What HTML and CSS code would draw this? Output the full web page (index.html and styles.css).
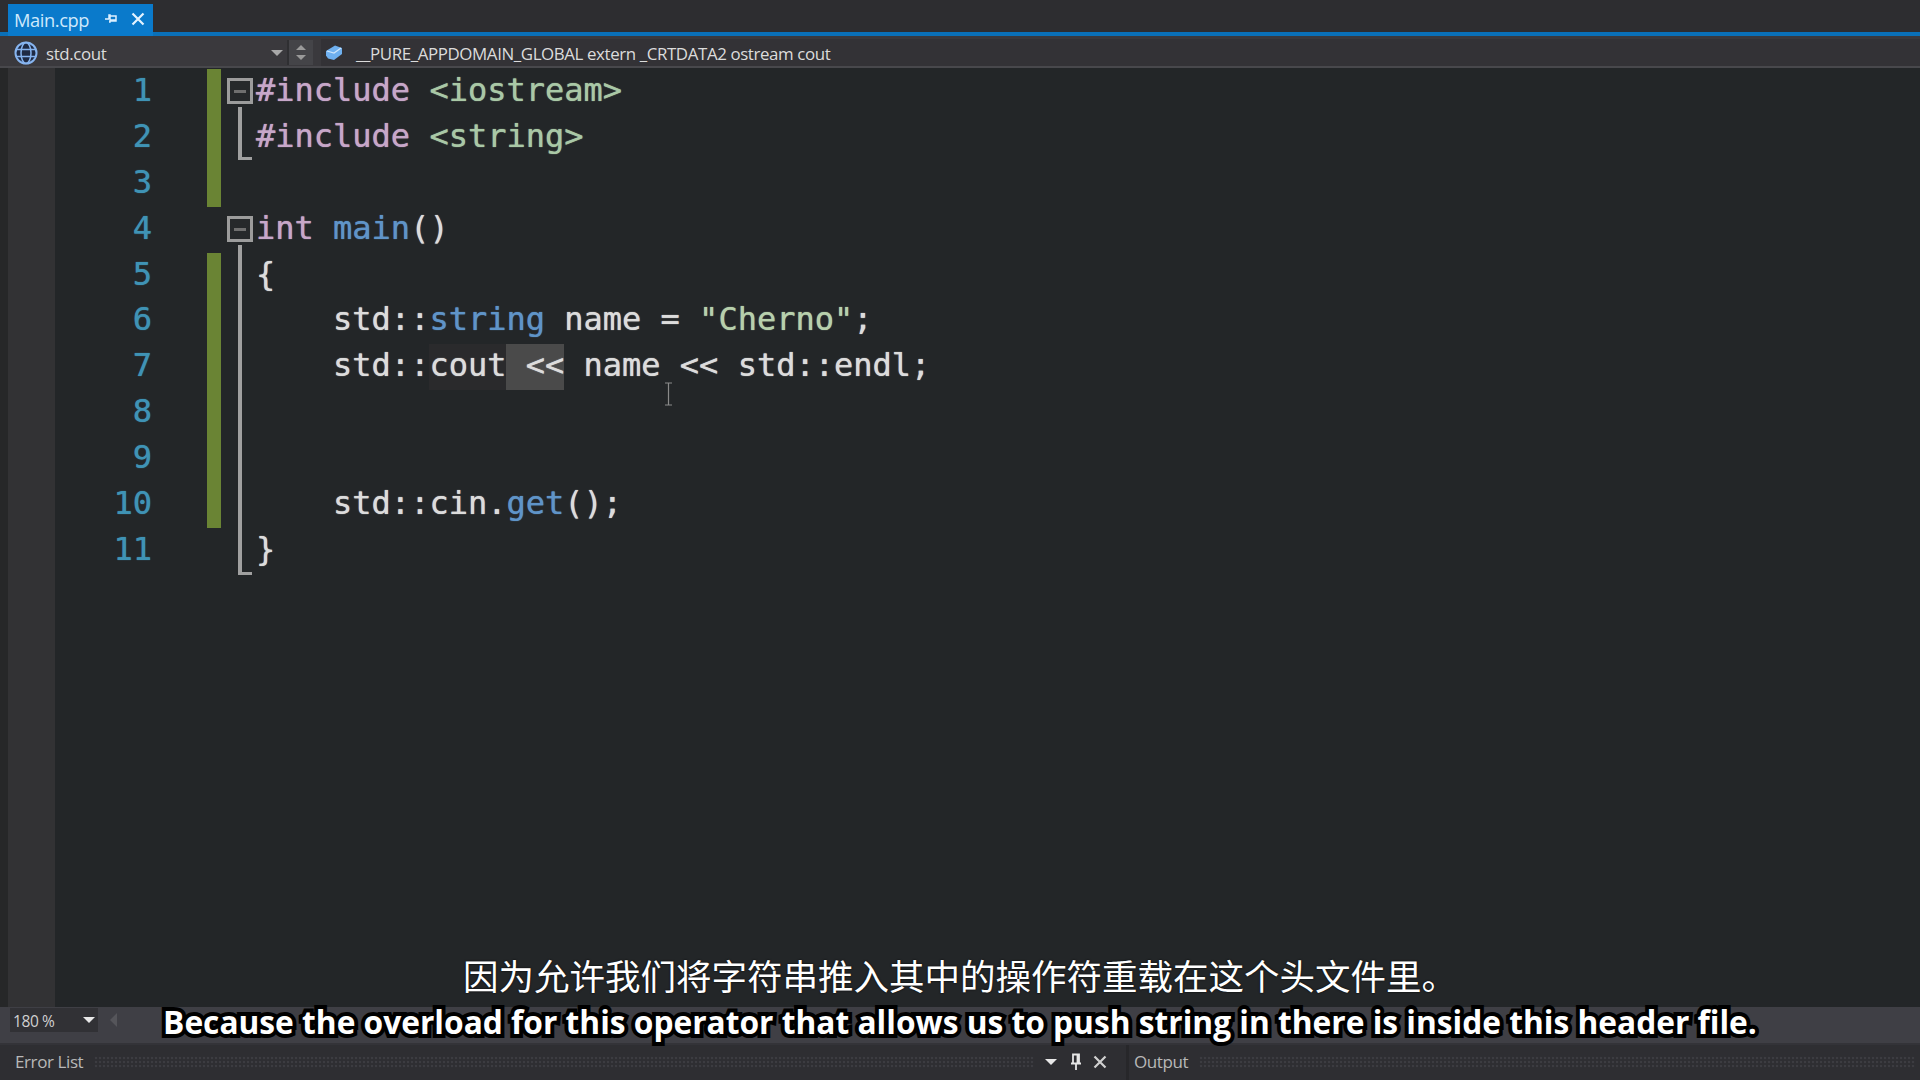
FILE: index.html
```html
<!DOCTYPE html>
<html lang="en">
<head>
<meta charset="utf-8">
<title>Main.cpp</title>
<link rel="stylesheet" href="styles.css">
</head>
<body>
<div class="app">
  <div class="tabbar">
    <div class="tab">
      <span class="tab-name">Main.cpp</span>
      <svg class="tab-pin" width="14" height="12" viewBox="0 0 14 12"><path d="M1 6h4M5 6V2h1v7H5M6 3h6v5H6M6 7h6" fill="none" stroke="#dff1ff" stroke-width="1.5"/></svg>
      <svg class="tab-close" width="14" height="14" viewBox="0 0 14 14"><path d="M1.500 1.500l11 11M12.500 1.500l-11 11" stroke="#e4f3ff" stroke-width="2.200"/></svg>
    </div>
  </div>
  <div class="navbar">
    <div class="nav-scope">
      <svg class="nav-globe" width="24" height="24" viewBox="0 0 24 24"><circle cx="12" cy="12" r="10.500" fill="#1e2a44" stroke="#86b4ef" stroke-width="2"/><ellipse cx="12" cy="12" rx="5" ry="10.500" fill="none" stroke="#86b4ef" stroke-width="1.500"/><path d="M2 8.500h20M2 15.500h20" stroke="#86b4ef" stroke-width="1.500"/></svg>
      <span class="nav-text nav-scope-text">std.cout</span>
      <span class="arrow-down"></span>
    </div>
    <div class="nav-spin">
      <span class="spin-up"></span>
      <span class="spin-down"></span>
    </div>
    <div class="nav-member">
      <svg class="nav-cube" width="20" height="18" viewBox="0 0 20 18"><path d="M2 7l9-5.500 7 2.500v6l-8 6-6-1.500-2-3z" fill="#6fb0ef"/><path d="M3 7l7 2 7-5" fill="none" stroke="#cfe6fb" stroke-width="1.300"/></svg>
      <span class="nav-text">__PURE_APPDOMAIN_GLOBAL extern _CRTDATA2 ostream cout</span>
    </div>
  </div>
  <div class="editor">
    <div class="edge"></div>
    <div class="glyph-margin"></div>
    <div class="code">
      <div class="line"><span class="num">1</span><span class="chg"></span><span class="fold"><span class="fold-box"></span></span><span class="txt"><span class="kw">#include</span> <span class="inc">&lt;iostream&gt;</span></span></div>
      <div class="line"><span class="num">2</span><span class="chg"></span><span class="fold"><span class="fold-end"></span></span><span class="txt"><span class="kw">#include</span> <span class="inc">&lt;string&gt;</span></span></div>
      <div class="line"><span class="num">3</span><span class="chg"></span><span class="fold"></span><span class="txt"></span></div>
      <div class="line"><span class="num">4</span><span class="chg off"></span><span class="fold"><span class="fold-box"></span></span><span class="txt"><span class="kw">int</span> <span class="fn">main</span>()</span></div>
      <div class="line"><span class="num">5</span><span class="chg"></span><span class="fold"><span class="fold-line"></span></span><span class="txt">{</span></div>
      <div class="line"><span class="num">6</span><span class="chg"></span><span class="fold"><span class="fold-line"></span></span><span class="txt">    std::<span class="fn">string</span> name = <span class="str">"Cherno"</span>;</span></div>
      <div class="line"><span class="num">7</span><span class="chg"></span><span class="fold"><span class="fold-line"></span></span><span class="txt">    std::<span class="ref">cout</span><span class="sel"> &lt;&lt;</span> name &lt;&lt; std::endl;</span></div>
      <div class="line"><span class="num">8</span><span class="chg"></span><span class="fold"><span class="fold-line"></span></span><span class="txt"></span></div>
      <div class="line"><span class="num">9</span><span class="chg"></span><span class="fold"><span class="fold-line"></span></span><span class="txt"></span></div>
      <div class="line"><span class="num">10</span><span class="chg"></span><span class="fold"><span class="fold-line"></span></span><span class="txt">    std::cin.<span class="fn">get</span>();</span></div>
      <div class="line"><span class="num">11</span><span class="chg off"></span><span class="fold"><span class="fold-last"></span></span><span class="txt">}</span></div>
    </div>
    <svg class="caret" width="9" height="24" viewBox="0 0 9 24"><path d="M1 1h7M4.500 1v22M1 23h7" fill="none" stroke="#8a8a8a" stroke-width="1.200"/></svg>
  </div>
  <div class="statusrow">
    <div class="zoom"><span class="zoom-text">180 %</span><span class="arrow-down arrow-white"></span></div>
    <span class="arrow-left"></span>
  </div>
  <div class="panels">
    <div class="panel panel-left">
      <span class="panel-title">Error List</span>
      <span class="dots"></span>
      <span class="arrow-down arrow-white panel-arrow"></span>
      <svg width="12" height="18" viewBox="0 0 12 18"><path d="M3 1.500h6v9H3zM1 10.500h10M6 10.500V17M7.500 2v8" fill="none" stroke="#e6e6e6" stroke-width="1.800"/></svg>
      <svg width="14" height="14" viewBox="0 0 14 14"><path d="M1.500 1.500l11 11M12.500 1.500l-11 11" stroke="#d0d0d0" stroke-width="2.200"/></svg>
    </div>
    <div class="panel panel-right">
      <span class="panel-title">Output</span>
      <span class="dots"></span>
    </div>
  </div>
</div>
<div class="subs">
  <div class="sub-zh">因为允许我们将字符串推入其中的操作符重载在这个头文件里。</div>
  <div class="sub-en">Because the overload for this operator that allows us to push string in there is inside this header file.</div>
</div>
</body>
</html>
```
FILE: styles.css
```css
* { box-sizing: border-box; }
html, body { margin: 0; height: 100%; overflow: hidden; background: #2b2b2e; }
.app { position: relative; width: 1920px; height: 1080px; display: flex; flex-direction: column; }

.tabbar { height: 36px; padding: 4px 0 0 8px; background: #2d2d30; border-bottom: 4px solid #0a70b8; flex: none; }
.tab { width: 145px; height: 32px; padding: 0 8px 2px 6px; background: #0a7acb; display: flex; align-items: center; }
.tab-name { font: 18.300px "Open Sans", "Liberation Sans", sans-serif; color: #cfe9fb; letter-spacing: -0.4px; flex: 1; }
.tab-pin { margin-right: 13px; }

.navbar { height: 32px; flex: none; display: flex; padding: 3px 0 0 10px; background: #3a393d; border-bottom: 2px solid #48484c; color: #e0e0e0; }
.nav-scope { width: 277px; display: flex; align-items: center; padding: 0 0 0 4px; }
.nav-globe { margin-right: 8px; }
.nav-text { font: 16.900px "Open Sans", "Liberation Sans", sans-serif; color: #dcdcdc; letter-spacing: -0.4px; padding-top: 2px; }
.nav-scope-text { flex: 1; }
.arrow-down { width: 0; height: 0; border-left: 6px solid transparent; border-right: 6px solid transparent; border-top: 6px solid #a8a8a8; }
.nav-scope .arrow-down { margin-right: 4px; }
.arrow-white { border-top-color: #e8e8e8; }
.nav-spin { width: 26px; margin: 1px 20px 1px 0; display: flex; flex-direction: column; align-items: center; justify-content: center; gap: 5px; background: #444448; border-left: 2px solid #2f2f32; }
.spin-up { border-left: 5px solid transparent; border-right: 5px solid transparent; border-bottom: 5px solid #9a9a9a; }
.spin-down { border-left: 5px solid transparent; border-right: 5px solid transparent; border-top: 5px solid #9a9a9a; }
.nav-member { flex: 1; display: flex; align-items: center; background: #333236; margin-left: -12px; padding-left: 3px; }
.nav-cube { margin-right: 12px; }

.editor { position: relative; flex: 1; min-height: 0; display: flex; background: #232628; }
.edge { width: 8px; background: #262728; flex: none; }
.glyph-margin { width: 47px; background: #323234; flex: none; }
.code { flex: 1; padding-top: 1px; }
.line { height: 45.900px; display: flex; font: 32px/42px "DejaVu Sans Mono", "Liberation Mono", monospace; color: #dcdcdc; white-space: pre; text-shadow: 0 0 1px currentColor; }
.num { width: 97px; text-align: right; color: #3f93b5; flex: none; }
.chg { width: 14px; margin-left: 55px; background: #6a8434; flex: none; }
.chg.off { background: none; }
.fold { position: relative; width: 34px; flex: none; }
.fold-box { position: absolute; left: 6px; top: 9px; width: 26px; height: 26px; border: 3px solid #9c9c9c; background: #26292b; z-index: 1; }
.fold-box::after { content: ""; position: absolute; left: 4px; right: 4px; top: 9px; height: 3px; background: #6f6f6f; }
.fold-line { position: absolute; left: 17px; top: -8px; bottom: 0; width: 4px; background: #a0a0a0; }
.fold-end { position: absolute; left: 17px; top: -8px; bottom: 1px; width: 14px; border-left: 4px solid #a0a0a0; border-bottom: 3px solid #a0a0a0; }
.fold-last { position: absolute; left: 17px; top: -8px; bottom: -1px; width: 14px; border-left: 4px solid #a0a0a0; border-bottom: 3px solid #a0a0a0; }
.txt { flex: 1; margin-left: 1px; }
.kw { color: #c7a7c9; }
.inc { color: #a9c8a6; }
.fn { color: #5f94c8; }
.str { color: #b7d0ac; }
.ref { background: #2a2a2c; display: inline-block; height: 45.900px; }
.sel { background: #4a4a4a; display: inline-block; height: 45.900px; }
.caret { position: absolute; left: 664px; top: 314px; }

.statusrow { height: 38px; flex: none; display: flex; align-items: flex-start; padding: 1px 0 0 10px; background: #3f3f45; border-bottom: 2px solid #333338; }
.zoom { width: 88px; height: 24px; padding: 0 3px 0 3px; display: flex; align-items: center; justify-content: space-between; background: #313135; }
.zoom-text { font: 15.500px "Open Sans", "Liberation Sans", sans-serif; color: #d0d0d0; letter-spacing: -0.4px; padding-top: 1px; }
.arrow-left { width: 0; height: 0; margin: 5px 0 0 12px; border-top: 7px solid transparent; border-bottom: 7px solid transparent; border-right: 7px solid #55555a; }

.panels { height: 35px; flex: none; display: flex; gap: 15px; padding-left: 10px; background: #2e2e32; }
.panel { display: flex; align-items: center; padding: 0 5px 2px; gap: 11px; background: #2e2e32; }
.panel-left { width: 1101px; padding-right: 4px; }
.panel-arrow { margin-right: 2px; }
.panel-right { flex: 1; border-left: 3px solid #27272a; }
.panel-title { font: 17px "Open Sans", "Liberation Sans", sans-serif; color: #b8b8b8; letter-spacing: -0.4px; }
.dots { flex: 1; height: 12px; background-image: radial-gradient(#3c3c41 1.300px, transparent 1.600px); background-size: 4px 4px; }

.subs { position: absolute; left: 0; right: 0; top: 953px; display: flex; flex-direction: column; align-items: center; color: #fff; }
.sub-zh { font: 400 35.500px/44px "Noto Sans CJK SC", sans-serif; text-shadow: 0 0 2px #000; }
.sub-en { font: 700 31.700px/50px "Open Sans", "Lato", sans-serif; -webkit-text-stroke: 8px #000; paint-order: stroke fill; }
```
